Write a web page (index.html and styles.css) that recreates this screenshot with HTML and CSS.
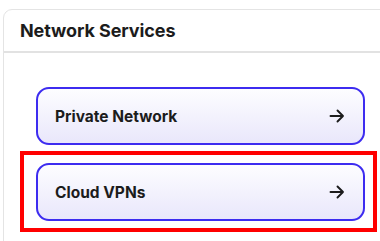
FILE: index.html
```html
<!DOCTYPE html>
<html>
<head>
<meta charset="utf-8">
<link rel="stylesheet" href="styles.css">
</head>
<body>
<div class="card">
  <div class="card-header">
    <h2 class="card-title">Network Services</h2>
  </div>
  <div class="card-body">
    <div class="item">
      <button class="link-btn"><span class="label">Private Network</span>
        <svg class="arrow" width="16" height="16" viewBox="0 0 16 16"><path d="M1.5 8h12.5M8.5 2.5L14 8l-5.5 5.5" fill="none" stroke="#1c1c1c" stroke-width="1.9" stroke-linecap="round" stroke-linejoin="round"/></svg>
      </button>
    </div>
    <div class="item highlighted">
      <button class="link-btn"><span class="label">Cloud VPNs</span>
        <svg class="arrow" width="16" height="16" viewBox="0 0 16 16"><path d="M1.5 8h12.5M8.5 2.5L14 8l-5.5 5.5" fill="none" stroke="#1c1c1c" stroke-width="1.9" stroke-linecap="round" stroke-linejoin="round"/></svg>
      </button>
      <div class="highlight"></div>
    </div>
  </div>
</div>
</body>
</html>
```
FILE: styles.css
```css
html, body {
  margin: 0;
  padding: 0;
  background: #ffffff;
}
body {
  font-family: Inter, "Liberation Sans", sans-serif;
  color: #1c1c1c;
  overflow: hidden;
}
.card {
  margin: 9px 0 0 3px;
  width: 420px;
  border: 1px solid #e4e4e4;
  border-radius: 9px;
  background: #fff;
}
.card-header {
  height: 41px;
  display: flex;
  align-items: center;
  padding-left: 16px;
  border-bottom: 2px solid #e2e2e2;
}
.card-title {
  margin: 0;
  font-size: 18px;
  font-weight: 700;
  letter-spacing: -0.1px;
}
.card-body {
  padding: 34px 0 30px 32px;
  display: flex;
  flex-direction: column;
  gap: 18px;
}
.item {
  position: relative;
  width: 329px;
}
.link-btn {
  width: 329px;
  height: 58px;
  box-sizing: border-box;
  border: 2px solid #3d2cf0;
  border-radius: 13px;
  background: linear-gradient(180deg, #fdfdff 0%, #e9e7fb 100%);
  display: flex;
  align-items: center;
  justify-content: space-between;
  padding: 0 18px 0 17px;
  font-family: Inter, "Liberation Sans", sans-serif;
  font-size: 15.5px;
  font-weight: 700;
  color: #1c1c1c;
}
.arrow {
  display: block;
}
.highlight {
  position: absolute;
  left: -16px;
  top: -12px;
  width: 357px;
  height: 81px;
  box-sizing: border-box;
  border: 4px solid #ff0000;
}
```
